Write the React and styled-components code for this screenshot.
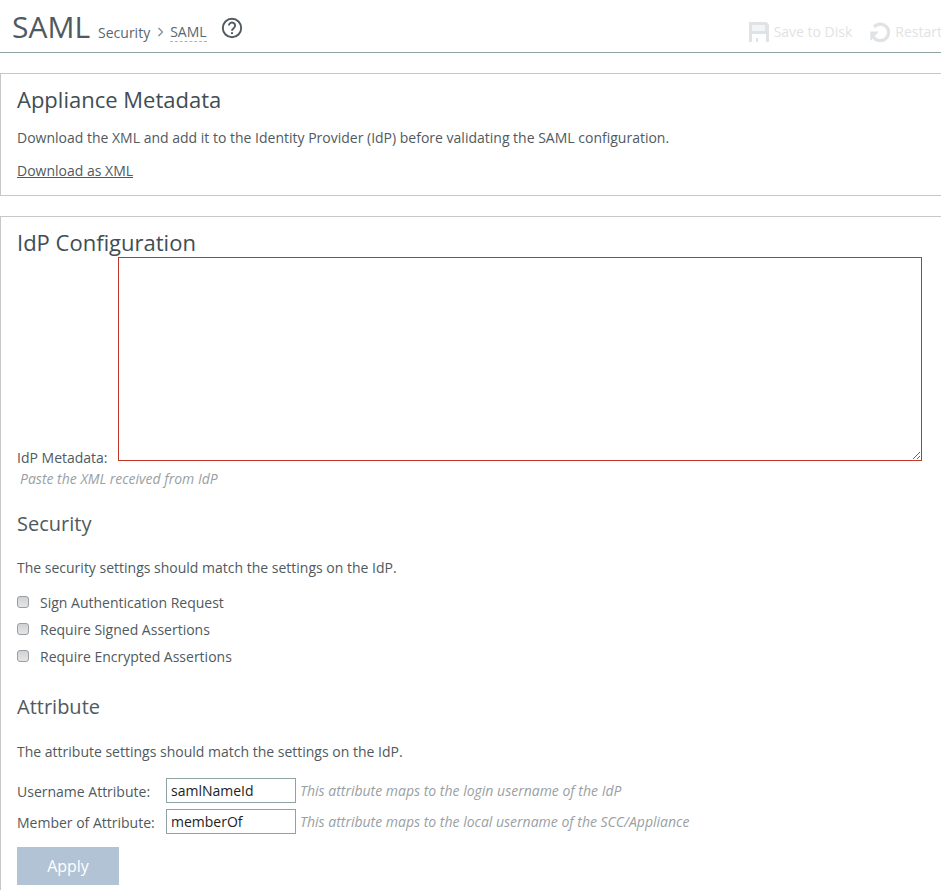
import React from "react";
import styled, { createGlobalStyle } from "styled-components";

const Global = createGlobalStyle`
  html, body { margin: 0; padding: 0; background: #fff; overflow: hidden; }
  body { font-family: "Open Sans", "Liberation Sans", sans-serif; color: #4f5a60; }
`;

const Viewport = styled.div`
  width: 941px;
  height: 890px;
  overflow: hidden;
`;
const Page = styled.div`
  width: 942px;
`;
const Header = styled.header`
  height: 52px;
  border-bottom: 1px solid #8fa3a3;
  display: flex;
  align-items: flex-start;
  justify-content: space-between;
  padding-left: 12px;
  box-sizing: content-box;
`;
const TitleGroup = styled.div`
  display: flex;
  align-items: flex-start;
`;
const Title = styled.h1`
  margin: 6px 0 0;
  font-size: 30px;
  line-height: 41px;
  font-weight: 400;
  color: #4f5a60;
`;
const Crumbs = styled.div`
  display: flex;
  align-items: center;
  margin: 22px 0 0 8px;
  font-size: 14px;
  line-height: 19px;
  color: #5a6670;
`;
const Chevron = styled.svg`
  width: 7px;
  height: 10px;
  margin: 0 6px 0 7px;
`;
const Current = styled.span`
  border-bottom: 1px dashed #aab4b8;
  padding-bottom: 0;
`;
const Help = styled.svg`
  width: 22px;
  height: 22px;
  margin: 17px 0 0 14px;
`;
const Actions = styled.div`
  display: flex;
  align-items: center;
  margin-top: 21px;
  gap: 18px;
`;
const Action = styled.div`
  display: flex;
  align-items: center;
  gap: 5px;
  font-size: 14px;
  line-height: 21px;
  color: #dfe3e5;
  white-space: nowrap;
`;
const ActionIcon = styled.svg`
  width: 20px;
  height: 20px;
  display: block;
`;
const Panel = styled.section`
  border: 1px solid #c4c8ca;
  border-right: 0;
  margin-top: ${(p) => p.$top}px;
  padding: ${(p) => p.$pad};
  box-sizing: border-box;
`;
const PanelTitle = styled.h2`
  margin: 0;
  font-size: 22px;
  line-height: 30px;
  font-weight: 400;
  color: #3f4d55;
`;
const Text = styled.p`
  margin: ${(p) => p.$margin};
  font-size: 14px;
  line-height: 19px;
  color: #4f5a60;
`;
const DownloadLink = styled.a`
  display: block;
  margin-top: 14px;
  font-size: 14px;
  line-height: 19px;
  color: #4f5a60;
  text-decoration: underline;
`;
const MetadataRow = styled.div`
  display: flex;
  align-items: flex-end;
`;
const FieldLabel = styled.label`
  font-size: 14px;
  line-height: 19px;
  color: #4f5a60;
  white-space: nowrap;
`;
const MetadataLabel = styled(FieldLabel)`
  width: 101px;
  flex: none;
  margin-bottom: -6px;
`;
const Metadata = styled.textarea`
  display: block;
  width: 804px;
  height: 204px;
  box-sizing: border-box;
  border: 1px solid #c0392b;
  background: #fff;
  border-radius: 0;
  outline: none;
  margin: 0;
  padding: 4px;
`;
const Hint = styled.span`
  font-size: 14px;
  line-height: 19px;
  font-style: italic;
  color: #999fa3;
  white-space: nowrap;
`;
const MetaHint = styled(Hint)`
  display: block;
  margin: 8px 0 0 3px;
`;
const SectionTitle = styled.h3`
  margin: ${(p) => p.$margin};
  font-size: 20px;
  line-height: 27px;
  font-weight: 400;
  color: #4f5a60;
`;
const CheckList = styled.div`
  margin-top: 16px;
  display: flex;
  flex-direction: column;
  gap: 8px;
`;
const CheckRow = styled.label`
  display: flex;
  align-items: center;
  font-size: 14px;
  line-height: 19px;
  color: #4f5a60;
`;
const Box = styled.span`
  width: 12px;
  height: 12px;
  flex: none;
  box-sizing: border-box;
  margin: -1px 11px 0 0;
  border: 1px solid #9a9ea1;
  border-radius: 3px;
  background: linear-gradient(#d0d2d4, #e4e5e6);
`;
const AttrList = styled.div`
  margin-top: 17px;
  display: flex;
  flex-direction: column;
  gap: 6px;
`;
const AttrRow = styled.div`
  display: flex;
  align-items: center;
`;
const AttrLabel = styled(FieldLabel)`
  width: 149px;
  flex: none;
  padding-top: 2px;
`;
const AttrInput = styled.input`
  width: 130px;
  height: 25px;
  box-sizing: border-box;
  border: 1px solid #8fa3a3;
  border-radius: 0;
  padding: 0 4px;
  margin: 0;
  font-family: inherit;
  font-size: 14px;
  color: #222;
  outline: none;
`;
const AttrHint = styled(Hint)`
  margin-left: 4px;
`;
const Apply = styled.button`
  display: block;
  margin-top: 13px;
  width: 102px;
  height: 38px;
  border: 0;
  border-radius: 0;
  background: #b2c3d5;
  color: #fff;
  font-family: inherit;
  font-size: 16px;
`;

export default function App() {
  return (
    <Viewport>
      <Global />
      <Page>
        <Header>
          <TitleGroup>
            <Title>SAML</Title>
            <Crumbs>
              <span>Security</span>
              <Chevron viewBox="0 0 7 10" fill="none" stroke="#7b858a" strokeWidth="1.1">
                <path d="M1.5 1l4 4-4 4" />
              </Chevron>
              <Current>SAML</Current>
            </Crumbs>
            <Help viewBox="0 0 22 22" fill="none" stroke="#4f5a60">
              <circle cx="11" cy="11" r="9.2" strokeWidth="1.9" />
              <path d="M7.9 8.6a3.1 3.1 0 1 1 4.9 2.5c-1 .7-1.8 1.2-1.8 2.6" strokeWidth="1.9" />
              <circle cx="11" cy="16.2" r="1.1" fill="#4f5a60" stroke="none" />
            </Help>
          </TitleGroup>
          <Actions>
            <Action>
              <ActionIcon viewBox="0 0 20 20" fill="#dfe3e5">
                <path d="M0 0h17.5L20 2.5V20H0z" />
                <path d="M3 3h13v6H3z" fill="#f3f4f5" />
                <path d="M3 12h14v8H3z" fill="#fff" />
                <path d="M7 16h2v4H7z" />
              </ActionIcon>
              Save to Disk
            </Action>
            <Action>
              <ActionIcon viewBox="0 0 20 20" fill="none" stroke="#dfe3e5" strokeWidth="3.2">
                <path d="M4 5A8.3 8.3 0 1 1 3.4 15" />
                <path d="M.3 9.5h8.5l-8.5 9.5z" fill="#dfe3e5" stroke="none" />
              </ActionIcon>
              Restart
            </Action>
          </Actions>
        </Header>

        <Panel $top={20} $pad="10px 16px 15px">
          <PanelTitle>Appliance Metadata</PanelTitle>
          <Text $margin="14px 0 0">
            Download the XML and add it to the Identity Provider (IdP) before validating the SAML configuration.
          </Text>
          <DownloadLink>Download as XML</DownloadLink>
        </Panel>

        <Panel $top={20} $pad="10px 16px 30px">
          <PanelTitle>IdP Configuration</PanelTitle>
          <MetadataRow>
            <MetadataLabel>IdP Metadata:</MetadataLabel>
            <Metadata aria-label="IdP Metadata" />
          </MetadataRow>
          <MetaHint>Paste the XML received from IdP</MetaHint>

          <SectionTitle $margin="22px 0 0">Security</SectionTitle>
          <Text $margin="21px 0 0">The security settings should match the settings on the IdP.</Text>
          <CheckList>
            <CheckRow><Box />Sign Authentication Request</CheckRow>
            <CheckRow><Box />Require Signed Assertions</CheckRow>
            <CheckRow><Box />Require Encrypted Assertions</CheckRow>
          </CheckList>

          <SectionTitle $margin="27px 0 0">Attribute</SectionTitle>
          <Text $margin="22px 0 0">The attribute settings should match the settings on the IdP.</Text>
          <AttrList>
            <AttrRow>
              <AttrLabel>Username Attribute:</AttrLabel>
              <AttrInput defaultValue="samlNameId" />
              <AttrHint>This attribute maps to the login username of the IdP</AttrHint>
            </AttrRow>
            <AttrRow>
              <AttrLabel>Member of Attribute:</AttrLabel>
              <AttrInput defaultValue="memberOf" />
              <AttrHint>This attribute maps to the local username of the SCC/Appliance</AttrHint>
            </AttrRow>
          </AttrList>
          <Apply>Apply</Apply>
        </Panel>
      </Page>
    </Viewport>
  );
}
